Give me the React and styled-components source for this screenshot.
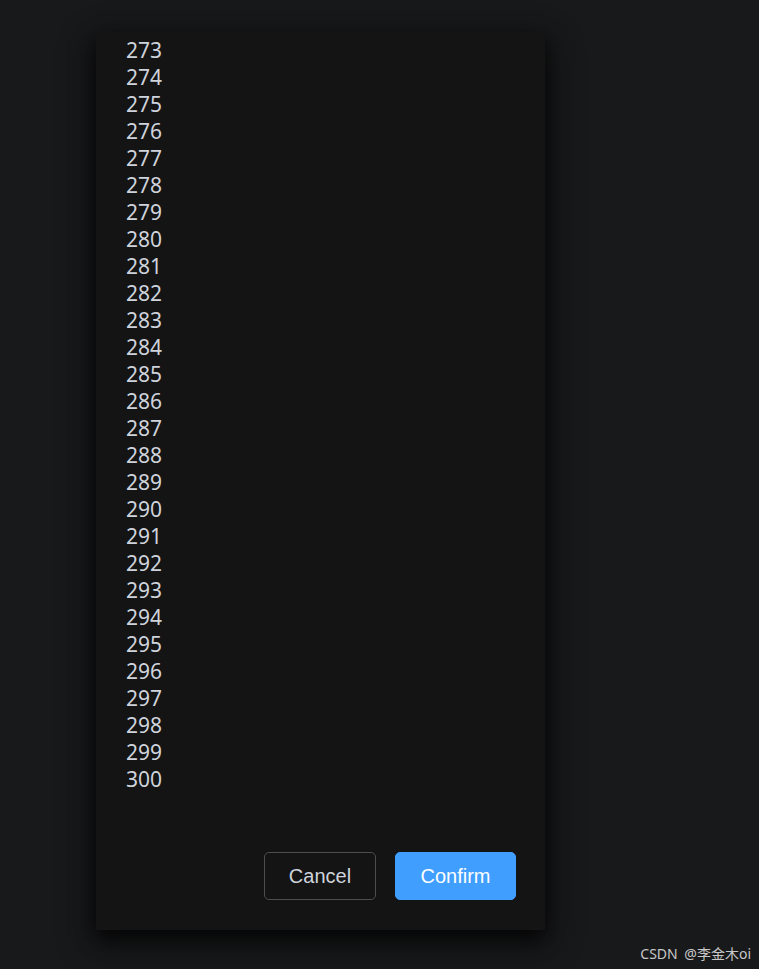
import React from 'react'
import styled, { createGlobalStyle } from 'styled-components'

const Global = createGlobalStyle`
  html, body {
    margin: 0;
    padding: 0;
    background: #18191b;
  }
  body {
    min-height: 969px;
  }
`

const Page = styled.div`
  position: relative;
  height: 969px;
  padding-top: 32px;
  box-sizing: border-box;
`

const Dialog = styled.div`
  width: 449px;
  margin-left: 96px;
  background: #141414;
  box-shadow: 0 12px 32px 4px rgba(0, 0, 0, 0.36), 0 8px 20px rgba(0, 0, 0, 0.72);
  display: flex;
  flex-direction: column;
`

const Body = styled.div`
  padding: 5px 30px 0;
  font-family: "Noto Sans", "Open Sans", sans-serif;
  font-size: 21px;
  line-height: 27px;
  color: #cfd3dc;
`

const Line = styled.div`
  height: 27px;
`

const Footer = styled.div`
  display: flex;
  justify-content: flex-end;
  gap: 19px;
  padding: 59px 29px 30px;
`

const Button = styled.button`
  height: 48px;
  padding: 0;
  width: ${(p) => (p.primary ? '121px' : '112px')};
  border-radius: 5px;
  border: 1px solid ${(p) => (p.primary ? '#409eff' : '#4c4d4f')};
  background: ${(p) => (p.primary ? '#409eff' : 'transparent')};
  color: ${(p) => (p.primary ? '#ffffff' : '#cfd3dc')};
  font-family: "Liberation Sans", Arial, sans-serif;
  font-size: 20px;
  cursor: pointer;
`

const Mark = styled.div`
  position: absolute;
  right: 8px;
  bottom: 6px;
  font-family: "Noto Sans", "Noto Sans CJK SC", sans-serif;
  font-size: 14px;
  word-spacing: 3px;
  color: #c8c8c8;
`

export default function App() {
  const rows = []
  for (let i = 273; i <= 300; i++) rows.push(i)
  return (
    <Page>
      <Global />
      <Dialog>
        <Body>
          {rows.map((n) => (
            <Line key={n}>{n}</Line>
          ))}
        </Body>
        <Footer>
          <Button>Cancel</Button>
          <Button primary>Confirm</Button>
        </Footer>
      </Dialog>
      <Mark>CSDN @李金木oi</Mark>
    </Page>
  )
}
